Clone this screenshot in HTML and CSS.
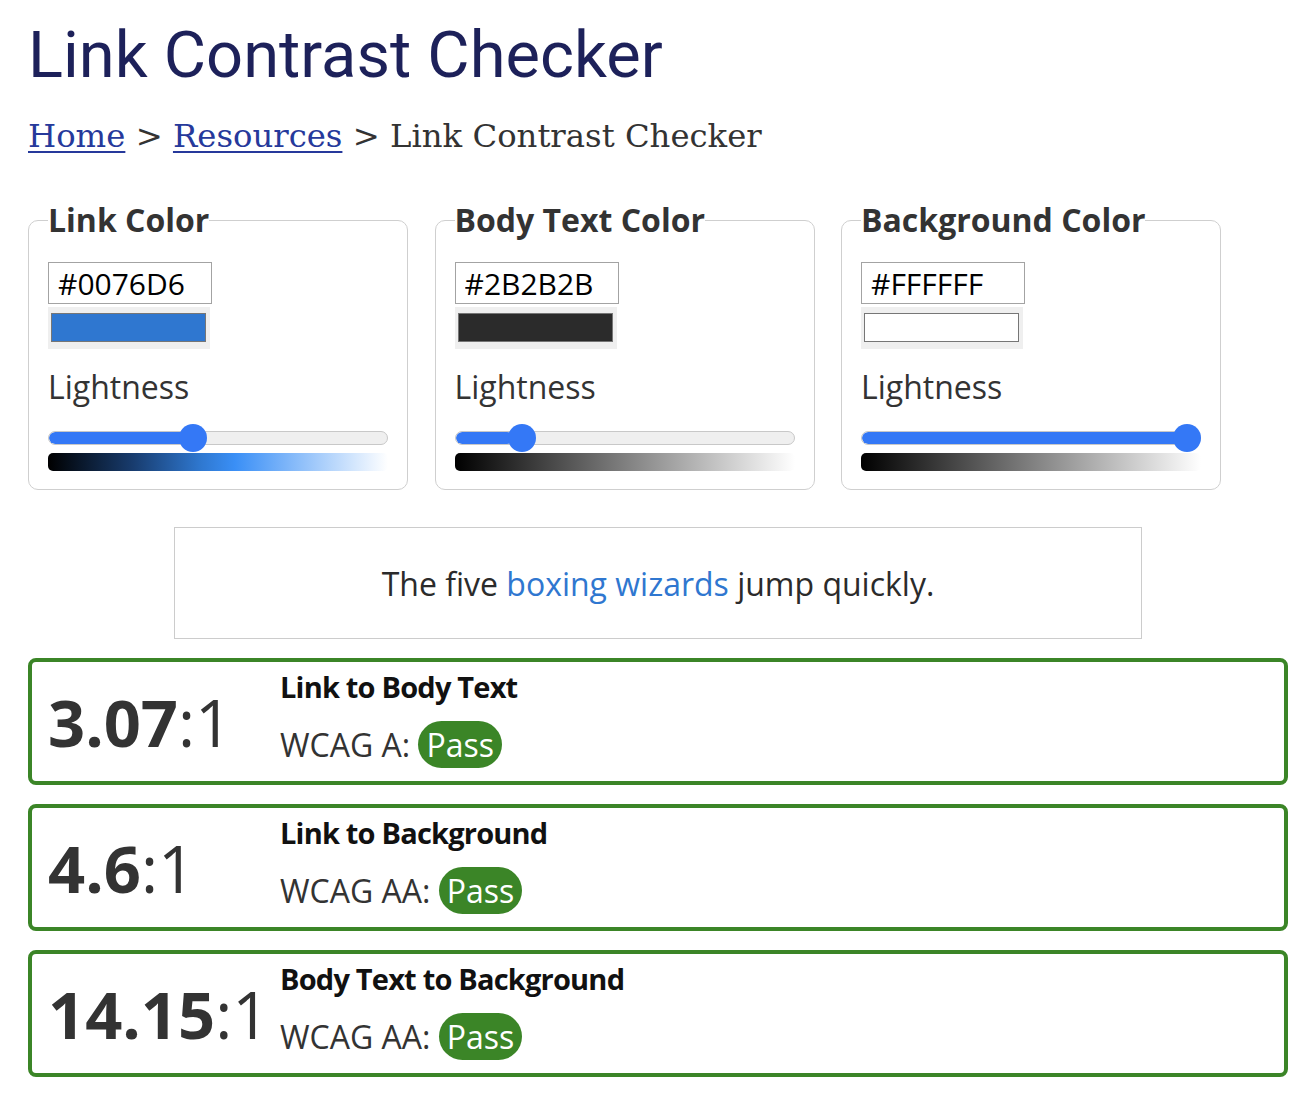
FILE: index.html
```html
<!DOCTYPE html>
<html lang="en">
<head>
<meta charset="utf-8">
<title>Link Contrast Checker</title>
<link rel="stylesheet" href="styles.css">
</head>
<body>
<main class="page">
  <h1 class="title">Link Contrast Checker</h1>
  <nav class="crumbs"><a href="#">Home</a> &gt; <a href="#">Resources</a> &gt; Link Contrast Checker</nav>

  <div class="pickers">
    <fieldset class="picker">
      <legend>Link Color</legend>
      <input class="hex" type="text" value="#0076D6">
      <div class="swatch"><span class="swatch-color swatch-link"></span></div>
      <div class="label">Lightness</div>
      <div class="slider">
        <div class="track"><div class="fill" style="width:42%"></div></div>
        <span class="thumb" style="left:calc((100% - 28px) * 0.42)"></span>
      </div>
      <div class="grad grad-blue"></div>
    </fieldset>

    <fieldset class="picker">
      <legend>Body Text Color</legend>
      <input class="hex" type="text" value="#2B2B2B">
      <div class="swatch"><span class="swatch-color swatch-body"></span></div>
      <div class="label">Lightness</div>
      <div class="slider">
        <div class="track"><div class="fill" style="width:17%"></div></div>
        <span class="thumb" style="left:calc((100% - 28px) * 0.17)"></span>
      </div>
      <div class="grad grad-gray"></div>
    </fieldset>

    <fieldset class="picker">
      <legend>Background Color</legend>
      <input class="hex" type="text" value="#FFFFFF">
      <div class="swatch"><span class="swatch-color swatch-bg"></span></div>
      <div class="label">Lightness</div>
      <div class="slider">
        <div class="track"><div class="fill" style="width:100%"></div></div>
        <span class="thumb" style="left:calc((100% - 28px) * 1)"></span>
      </div>
      <div class="grad grad-gray"></div>
    </fieldset>
  </div>

  <div class="sample">
    <p>The five <a href="#">boxing wizards</a> jump quickly.</p>
  </div>

  <section class="results">
    <div class="result">
      <div class="ratio"><b>3.07</b>:1</div>
      <div class="info">
        <h2>Link to Body Text</h2>
        <div class="level">WCAG A: <span class="pill">Pass</span></div>
      </div>
    </div>
    <div class="result">
      <div class="ratio"><b>4.6</b>:1</div>
      <div class="info">
        <h2>Link to Background</h2>
        <div class="level">WCAG AA: <span class="pill">Pass</span></div>
      </div>
    </div>
    <div class="result">
      <div class="ratio"><b>14.15</b>:1</div>
      <div class="info">
        <h2>Body Text to Background</h2>
        <div class="level">WCAG AA: <span class="pill">Pass</span></div>
      </div>
    </div>
  </section>
</main>
</body>
</html>
```

FILE: styles.css
```css
* { box-sizing: border-box; }

body {
  margin: 0;
  background: #fff;
  font-family: "Open Sans", "Noto Sans", sans-serif;
  color: #333;
}

.page {
  width: 1260px;
  margin-left: 28px;
  padding-bottom: 28px;
}

.title {
  margin: 17px 0 0;
  font-family: Roboto, "Liberation Sans", sans-serif;
  font-weight: 400;
  font-size: 65px;
  line-height: 77px;
  color: #1d215a;
}

.crumbs {
  margin-top: 22px;
  font-family: "DejaVu Serif", "Liberation Serif", serif;
  font-size: 32.3px;
  line-height: 40px;
  color: #333;
}

.crumbs a {
  color: #26399b;
  text-decoration: underline;
  text-decoration-thickness: 2px;
  text-underline-offset: 4px;
}

.pickers {
  margin-top: 44px;
  display: grid;
  grid-template-columns: repeat(3, 380px);
  column-gap: 26.5px;
}

.picker {
  margin: 0;
  min-width: 0;
  border: 1px solid #cfcfcf;
  border-radius: 10px;
  padding: 22px 19px 18px;
}

.picker legend {
  padding: 0;
  font-weight: 700;
  font-size: 32px;
  line-height: 40px;
  color: #333;
}

.hex {
  display: block;
  width: 164px;
  height: 42px;
  margin: 0;
  border: 1px solid #a3a3a3;
  border-radius: 0;
  padding: 0 0 0 9px;
  font-family: "Open Sans", sans-serif;
  font-size: 30px;
  color: #000;
  background: #fff;
}

.swatch {
  width: 162px;
  height: 42px;
  margin-top: 3px;
  padding: 6px 4px 7px 3px;
  background: #efefef;
}

.swatch-color {
  display: block;
  height: 100%;
  border: 1px solid #767676;
}

.swatch-link { background: #2f77d0; }
.swatch-body { background: #2b2b2b; }
.swatch-bg { background: #ffffff; }

.label {
  margin-top: 18px;
  font-size: 32px;
  line-height: 40px;
  color: #333;
}

.slider {
  position: relative;
  margin-top: 17px;
  height: 28px;
  padding-top: 7px;
}

.track {
  height: 14px;
  border: 1px solid #c8c8c8;
  border-radius: 7px;
  background: #efefef;
  overflow: hidden;
}

.fill {
  height: 100%;
  background: #3478f6;
  border-radius: 7px;
}

.thumb {
  position: absolute;
  top: 0;
  width: 28px;
  height: 28px;
  border-radius: 50%;
  background: #3478f6;
}

.grad {
  height: 18px;
  margin-top: 1px;
  border-radius: 5px;
}

.grad-blue {
  background: linear-gradient(to right, #000 0%, #183c6e 25%, #2f78d0 45%, #3a8ff6 55%, #ffffff 100%);
}

.grad-gray {
  background: linear-gradient(to right, #000 0%, #ffffff 100%);
}

.sample {
  width: 968px;
  height: 112px;
  margin: 37px auto 0;
  border: 1px solid #cccccc;
  display: flex;
  align-items: center;
  justify-content: center;
}

.sample p {
  margin: 0;
  font-size: 32px;
  color: #2b2b2b;
}

.sample a {
  color: #2f77d0;
  text-decoration: none;
}

.results {
  margin-top: 19px;
  display: flex;
  flex-direction: column;
  gap: 19px;
}

.result {
  display: flex;
  align-items: center;
  height: 127px;
  border: 4px solid #3b8527;
  border-radius: 8px;
  padding: 0 16px;
}

.ratio {
  flex: 0 0 232px;
  font-size: 65px;
  color: #333;
}

.ratio b { font-weight: 700; }

.info {
  align-self: stretch;
  padding-top: 5px;
}

.info h2 {
  margin: 0;
  font-size: 29px;
  line-height: 40px;
  font-weight: 700;
  color: #111;
  letter-spacing: -0.8px;
}

.level {
  margin-top: 14px;
  font-size: 32px;
  line-height: 47px;
  color: #333;
}

.pill {
  display: inline-block;
  padding: 0 8px;
  line-height: 47px;
  border-radius: 24px;
  background: #3b8527;
  color: #fff;
}
```
